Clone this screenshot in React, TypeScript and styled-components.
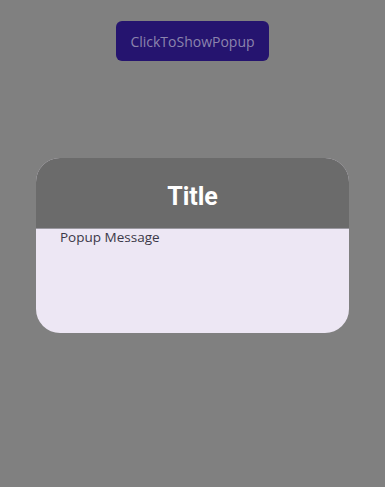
import styled, { createGlobalStyle } from 'styled-components';

const GlobalStyle = createGlobalStyle`
  html, body {
    margin: 0;
    padding: 0;
    height: 100%;
    background: #808080;
  }
  #root {
    min-height: 100%;
  }
`;

const Page = styled.main`
  min-height: 487px;
  display: flex;
  flex-direction: column;
  align-items: center;
  padding-top: 21px;
  box-sizing: border-box;
  background: #808080;
`;

const ShowButton = styled.button`
  width: 153px;
  height: 40px;
  border: none;
  border-radius: 6px;
  background: #25146f;
  color: #8c84ad;
  font-family: 'Open Sans', 'Noto Sans', sans-serif;
  font-size: 14px;
  padding: 0;
  cursor: pointer;
`;

const Popup = styled.section`
  margin-top: 97px;
  width: 313px;
  height: 175px;
  border-radius: 24px;
  overflow: hidden;
  display: flex;
  flex-direction: column;
  background: #ede7f4;
`;

const Header = styled.header`
  height: 71px;
  flex-shrink: 0;
  display: flex;
  align-items: center;
  justify-content: center;
  background: #6b6b6b;
  border-bottom: 1px solid #9a98a0;
  padding-top: 6px;
  box-sizing: border-box;

  & > h1 {
    margin: 0;
    font-family: Roboto, 'Liberation Sans', sans-serif;
    font-weight: 700;
    font-size: 25px;
    color: #ffffff;
  }
`;

const Message = styled.p`
  margin: 0;
  padding: 0 0 0 24px;
  font-family: 'Open Sans', 'Noto Sans', sans-serif;
  font-size: 13.5px;
  line-height: 17px;
  color: #3b3848;
`;

function App() {
  return (
    <>
      <GlobalStyle />
      <Page>
        <ShowButton>ClickToShowPopup</ShowButton>
        <Popup>
          <Header>
            <h1>Title</h1>
          </Header>
          <Message>Popup Message</Message>
        </Popup>
      </Page>
    </>
  );
}

export default App;
